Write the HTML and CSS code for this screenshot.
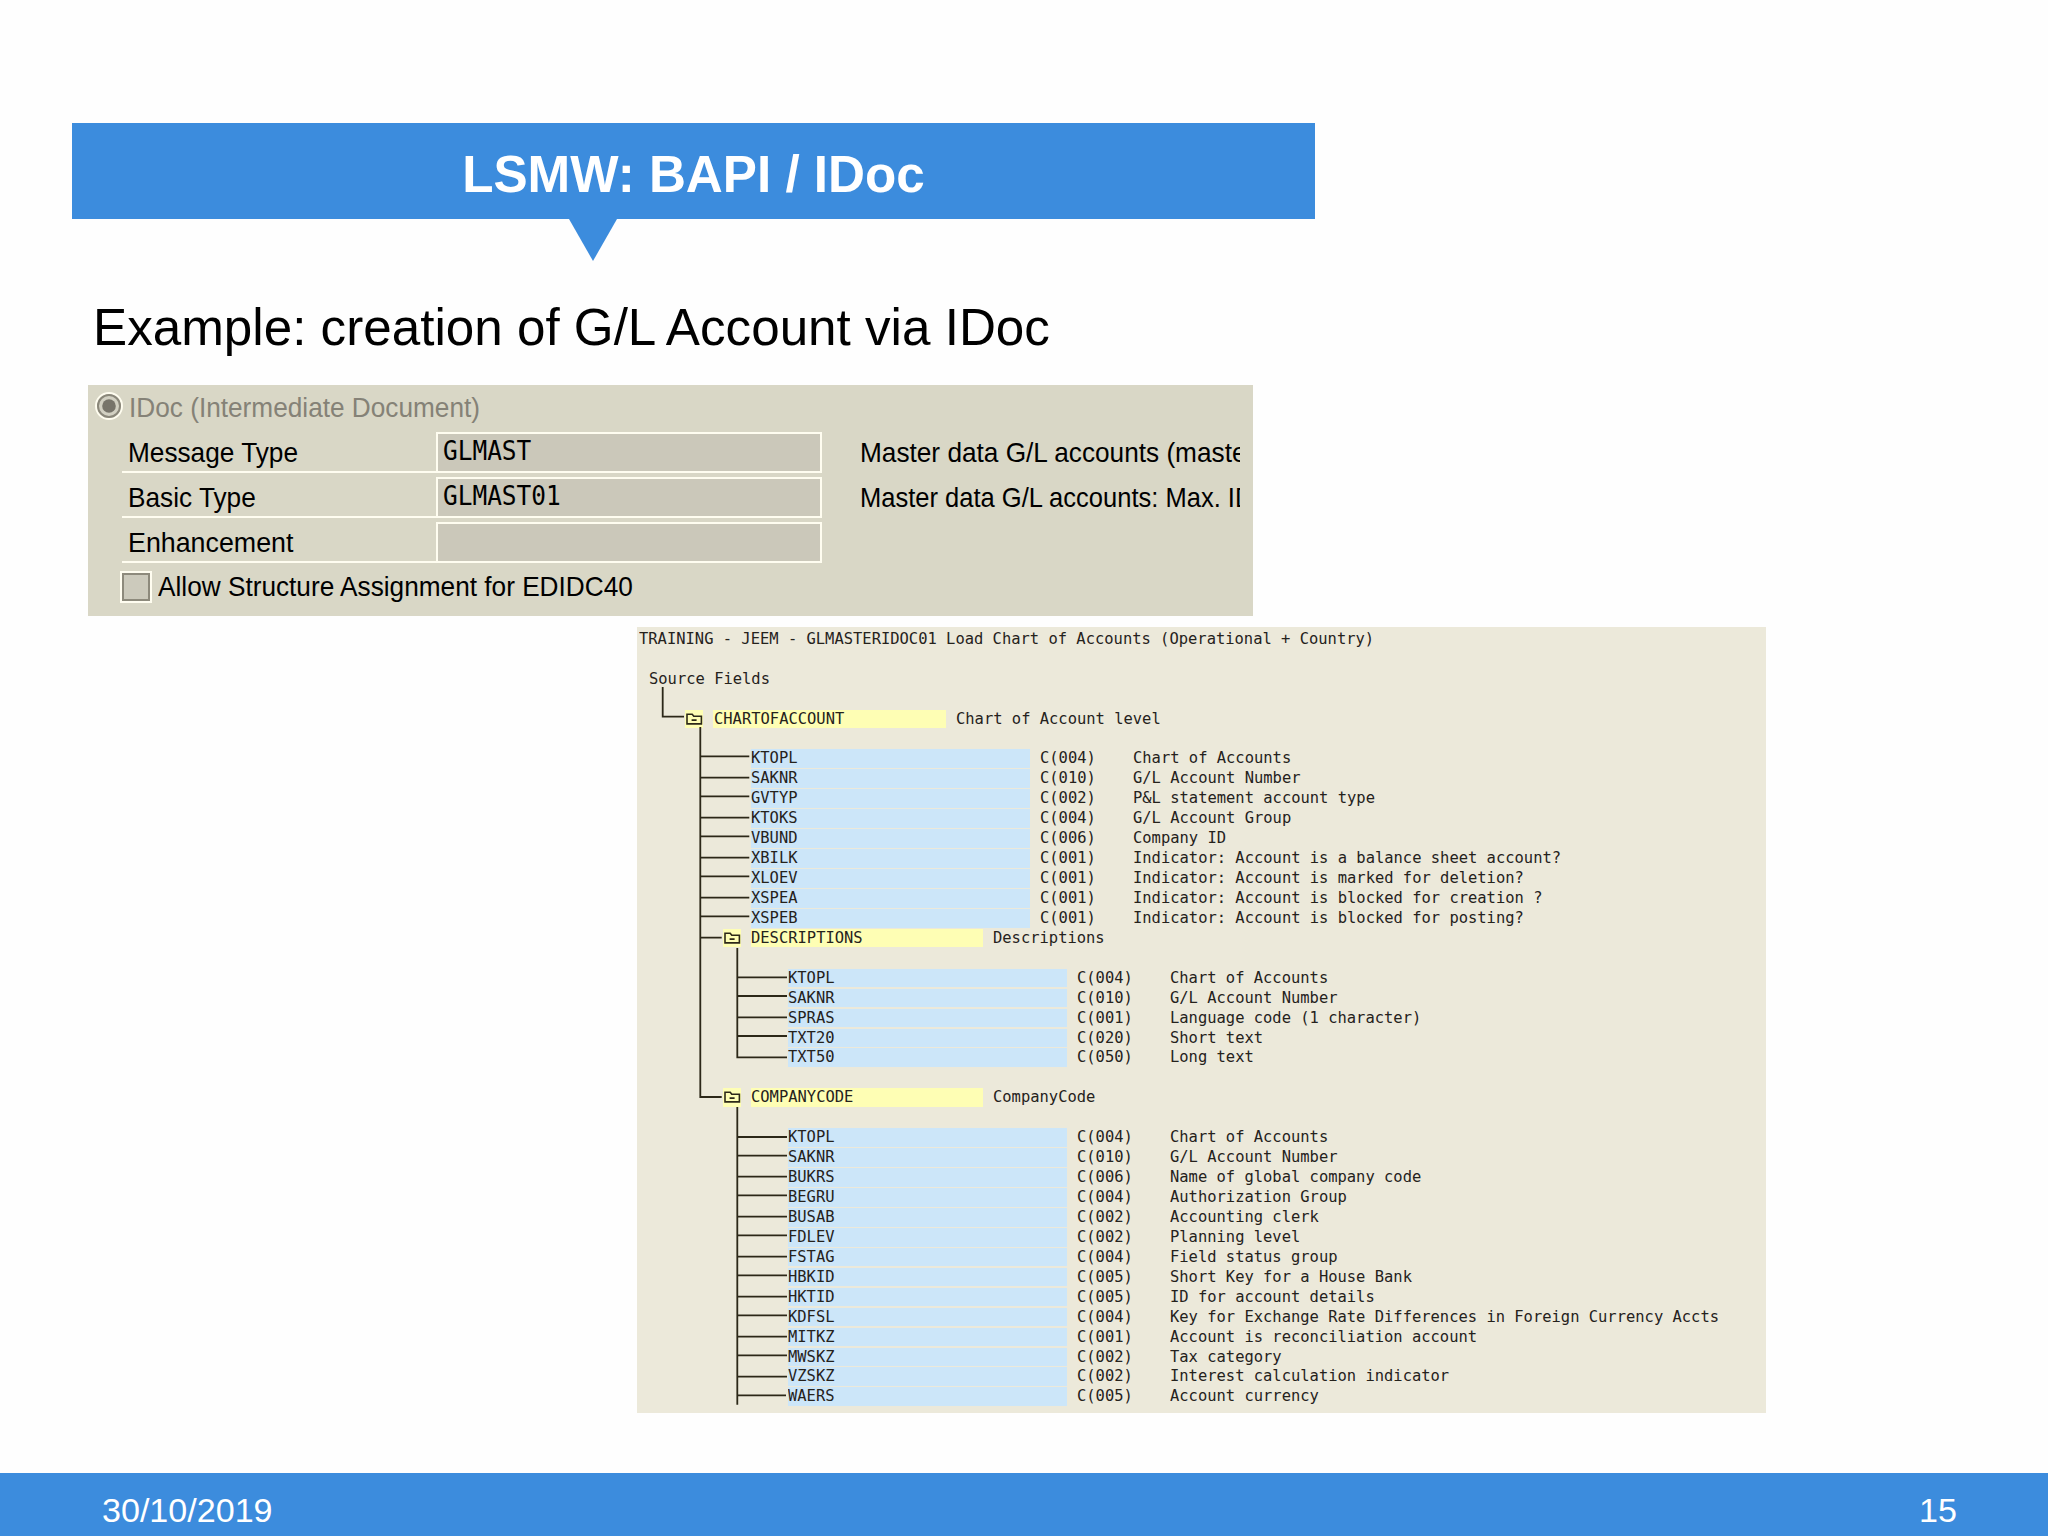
FILE: index.html
```html
<!DOCTYPE html>
<html lang="en">

<head>
    <meta charset="UTF-8">
    <meta name="viewport" content="width=device-width, initial-scale=1.0">
    <title>LSMW: BAPI / IDoc</title>
    <link rel="stylesheet" href="styles.css">
</head>

<body>
    <main class="slide">
        <h1 class="banner">LSMW: BAPI / IDoc</h1>
        <p class="subtitle">Example: creation of G/L Account via IDoc</p>

        <section class="idoc">
            <div class="idoc-head">
                <svg class="radio" viewBox="0 0 28 28">
                    <circle cx="14" cy="14" r="13" fill="#d2d0c2" stroke="#fffdf0" stroke-width="2" />
                    <circle cx="14" cy="14" r="11" fill="none" stroke="#8a877a" stroke-width="2" />
                    <circle cx="14" cy="14" r="6.8" fill="#77746a" />
                </svg>
                <span class="sans">IDoc (Intermediate Document)</span>
            </div>
            <div class="idoc-row">
                <div class="label"><span class="sans">Message Type</span></div>
                <div class="field"><span class="mono">GLMAST</span></div>
                <div class="info"><span class="sans">Master data G/L accounts (maste</span></div>
            </div>
            <div class="idoc-row">
                <div class="label"><span class="sans">Basic Type</span></div>
                <div class="field"><span class="mono">GLMAST01</span></div>
                <div class="info"><span class="sans tight">Master data G/L accounts: Max. ID</span></div>
            </div>
            <div class="idoc-row">
                <div class="label"><span class="sans wide">Enhancement</span></div>
                <div class="field"></div>
            </div>
            <div class="idoc-check">
                <span class="checkbox"></span>
                <span class="sans">Allow Structure Assignment for EDIDC40</span>
            </div>
        </section>

        <section class="tree">
            <div id="rows"></div>
            <!-- Connector lines -->
            <svg class="lines" viewBox="0 0 1129 786">
                <path d="M25.7 60V89.7H47" />
                <path d="M63.3 100V470H84.7M63.3 310.7H84.7" />
                <path d="M63.3 129.3h49M63.3 150.7h49M63.3 169.3h49M63.3 190.7h49M63.3 209.3h49M63.3 230.7h49M63.3 249.3h49M63.3 270.7h49M63.3 289.3h49" />
                <path d="M100.3 321V430.3H150M100.3 350.3h49.7M100.3 369h49.7M100.3 390.3h49.7M100.3 409h49.7" />
                <path d="M100.3 480V777.7M100.3 510h49.7M100.3 528.7h49.7M100.3 549.7h49.7M100.3 568.3h49.7M100.3 589.7h49.7M100.3 608.3h49.7M100.3 629.7h49.7M100.3 648.3h49.7M100.3 669.7h49.7M100.3 688.3h49.7M100.3 709.7h49.7M100.3 728.3h49.7M100.3 749.7h49.7M100.3 768.3h48.7" />
            </svg>
        </section>

        <footer class="footer">
            <span>30/10/2019</span>
            <span>15</span>
        </footer>
    </main>

    <script>
        const groups = [
            {
                name: 'CHARTOFACCOUNT', text: 'Chart of Account level', level: 1, fields: [
                    ['KTOPL', '004', 'Chart of Accounts'],
                    ['SAKNR', '010', 'G/L Account Number'],
                    ['GVTYP', '002', 'P&amp;L statement account type'],
                    ['KTOKS', '004', 'G/L Account Group'],
                    ['VBUND', '006', 'Company ID'],
                    ['XBILK', '001', 'Indicator: Account is a balance sheet account?'],
                    ['XLOEV', '001', 'Indicator: Account is marked for deletion?'],
                    ['XSPEA', '001', 'Indicator: Account is blocked for creation ?'],
                    ['XSPEB', '001', 'Indicator: Account is blocked for posting?']
                ]
            },
            {
                name: 'DESCRIPTIONS', text: 'Descriptions', level: 2, gapAfter: true, fields: [
                    ['KTOPL', '004', 'Chart of Accounts'],
                    ['SAKNR', '010', 'G/L Account Number'],
                    ['SPRAS', '001', 'Language code (1 character)'],
                    ['TXT20', '020', 'Short text'],
                    ['TXT50', '050', 'Long text']
                ]
            },
            {
                name: 'COMPANYCODE', text: 'CompanyCode', level: 2, fields: [
                    ['KTOPL', '004', 'Chart of Accounts'],
                    ['SAKNR', '010', 'G/L Account Number'],
                    ['BUKRS', '006', 'Name of global company code'],
                    ['BEGRU', '004', 'Authorization Group'],
                    ['BUSAB', '002', 'Accounting clerk'],
                    ['FDLEV', '002', 'Planning level'],
                    ['FSTAG', '004', 'Field status group'],
                    ['HBKID', '005', 'Short Key for a House Bank'],
                    ['HKTID', '005', 'ID for account details'],
                    ['KDFSL', '004', 'Key for Exchange Rate Differences in Foreign Currency Accts'],
                    ['MITKZ', '001', 'Account is reconciliation account'],
                    ['MWSKZ', '002', 'Tax category'],
                    ['VZSKZ', '002', 'Interest calculation indicator'],
                    ['WAERS', '005', 'Account currency']
                ]
            }
        ];

        const mono = text => `<span class="mono">${text}</span>`;
        const emptyRow = '<div class="row"></div>';
        const folder = `
            <svg class="folder" viewBox="0 0 18 18">
                <path d="M2 13.6V4h5.2l1.6 2h7.6v7.6zM6.6 9.8h5" />
            </svg>`;

        let html = `
            <div class="row">${mono('TRAINING - JEEM - GLMASTERIDOC01 Load Chart of Accounts (Operational + Country)')}</div>
            ${emptyRow}
            <div class="row source">${mono('Source Fields')}</div>
            ${emptyRow}`;

        groups.forEach(group => {
            html += `
                <div class="row group level-${group.level}">
                    ${folder}
                    <div class="group-name">${mono(group.name)}</div>
                    <div>${mono(group.text)}</div>
                </div>
                ${emptyRow}`;
            group.fields.forEach(([name, length, text]) => {
                html += `
                    <div class="row entry level-${group.level}">
                        <div class="entry-name">${mono(name)}</div>
                        <div>${mono(`C(${length})`)}</div>
                        <div>${mono(text)}</div>
                    </div>`;
            });
            if (group.gapAfter) {
                html += emptyRow;
            }
        });

        document.getElementById('rows').innerHTML = html;
    </script>
</body>

</html>
```
FILE: styles.css
```css
* {
    box-sizing: border-box;
}

body {
    margin: 0;
    background: #fefefe;
    font-family: "Liberation Sans", Arial, sans-serif;
    color: #000;
}

.slide {
    display: flex;
    flex-direction: column;
    align-items: flex-start;
    width: 2048px;
    height: 1536px;
    padding-top: 123px;
    overflow: hidden;
}

.banner {
    position: relative;
    width: 1243px;
    height: 96px;
    margin: 0 0 0 72px;
    background: #3c8cdd;
    color: #fff;
    font-size: 51.2px;
    line-height: 103px;
    text-align: center;
}

/* Arrow under the banner */
.banner::after {
    content: "";
    position: absolute;
    top: 96px;
    left: 497px;
    border: 24px solid transparent;
    border-top: 42px solid #3c8cdd;
    border-bottom: 0;
}

.subtitle {
    height: 60px;
    margin: 79px 0 27px 93px;
    font-size: 51.2px;
    line-height: 60px;
    white-space: nowrap;
}

.sans,
.mono {
    display: inline-block;
    transform-origin: 0 50%;
    white-space: pre;
}

.sans {
    font-size: 27.5px;
    line-height: 32px;
    transform: scaleX(0.953);
}

.sans.tight {
    transform: scaleX(0.928);
}

.sans.wide {
    transform: scaleX(0.975);
}

.mono {
    font-family: "DejaVu Sans Mono", monospace;
}

/* IDoc settings panel */
.idoc {
    width: 1165px;
    height: 231px;
    margin-left: 88px;
    padding: 7px 12px 0 7px;
    background: #d9d7c6;
}

.idoc-head {
    display: flex;
    height: 40px;
    color: #858277;
}

.radio {
    width: 28px;
    height: 28px;
    margin-right: 6px;
}

.idoc-row {
    display: flex;
    height: 41px;
    margin: 0 0 4px 27px;
}

.label {
    width: 314px;
    padding: 5px 0 0 6px;
    border-bottom: 2px solid #fffdf0;
}

.field {
    width: 386px;
    padding-left: 5px;
    border: 2px solid #fffdf0;
    background: #cbc8ba;
}

.field .mono {
    font-size: 27px;
    line-height: 34px;
    transform: scaleX(0.905);
}

.info {
    width: 418px;
    padding: 5px 0 0 38px;
    overflow: hidden;
}

.idoc-check {
    display: flex;
    margin-left: 25px;
    padding-top: 4px;
}

.checkbox {
    width: 32px;
    height: 32px;
    margin-right: 6px;
    border: 2px solid #fffdf0;
    outline: 2px solid #8d8a7c;
    outline-offset: -4px;
    background: #cccabc;
}

/* Source field tree, laid out on a fixed character pitch */
.tree {
    --ch: 9.31px;
    position: relative;
    width: 1129px;
    height: 786px;
    margin: 11px 0 0 637px;
    padding: 2.8px 0 0 1.8px;
    background: #ece9da;
    color: #25221c;
}

.tree .mono {
    margin-left: 0.6px;
    font-size: 16.4px;
    line-height: 18.6px;
    vertical-align: top;
    transform: scaleX(0.943);
}

.row {
    height: 19.95px;
}

.source {
    padding-left: var(--ch);
}

.group,
.entry {
    display: grid;
}

.group {
    grid-template-columns: calc(3 * var(--ch)) calc(26 * var(--ch)) 1fr;
    padding-left: calc(5 * var(--ch));
}

.entry {
    grid-template-columns: calc(31 * var(--ch)) calc(10 * var(--ch)) 1fr;
    padding-left: calc(12 * var(--ch));
}

.group.level-2 {
    padding-left: calc(9 * var(--ch));
}

.entry.level-2 {
    padding-left: calc(16 * var(--ch));
}

.group-name,
.entry-name {
    height: 18.6px;
    margin-right: var(--ch);
}

.group-name {
    background: #fefeb4;
}

.entry-name {
    background: #cce6f9;
}

.folder {
    width: 18px;
    height: 18.6px;
    background: #fefeb4;
    fill: none;
    stroke: #2c2818;
    stroke-width: 1.6;
}

.lines {
    position: absolute;
    top: 0;
    left: 0;
    width: 1129px;
    height: 786px;
    fill: none;
    stroke: #2c2818;
    stroke-width: 1.8;
}

.footer {
    display: flex;
    justify-content: space-between;
    width: 100%;
    height: 63px;
    margin-top: auto;
    padding: 0 91px 0 102px;
    background: #3c8cdd;
    color: #fff;
    font-size: 34.1px;
    line-height: 75px;
}
```
